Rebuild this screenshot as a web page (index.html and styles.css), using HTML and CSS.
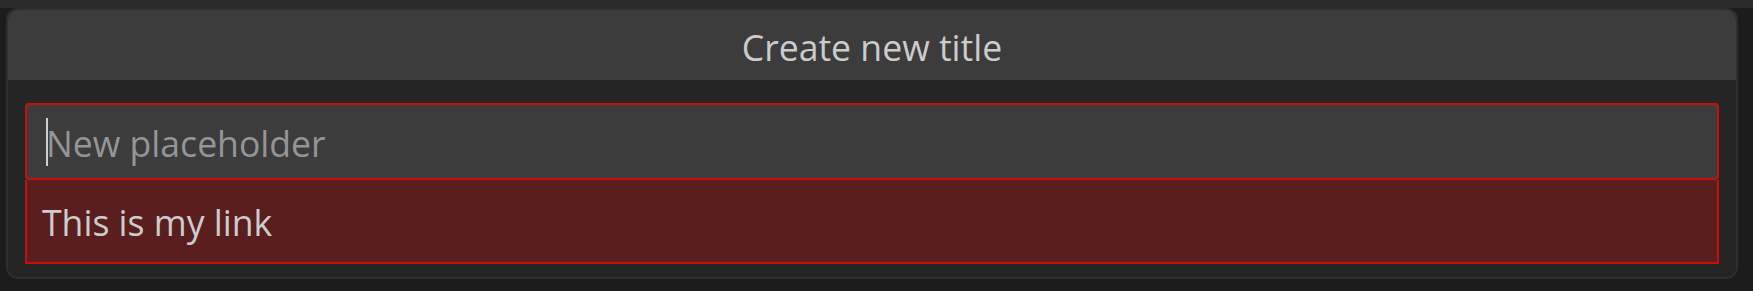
FILE: index.html
```html
<!DOCTYPE html>
<html lang="en">
<head>
<meta charset="utf-8">
<title>Create new title</title>
<link rel="stylesheet" href="styles.css">
</head>
<body>
<div class="topbar"></div>
<div class="dialog">
  <div class="header">Create new title</div>
  <div class="body">
    <div class="list">
      <div class="input"><span class="caret"></span><span class="placeholder">New placeholder</span></div>
      <div class="item">This is my link</div>
    </div>
  </div>
</div>
</body>
</html>
```
FILE: styles.css
```css
html, body {
  margin: 0;
  padding: 0;
}
body {
  background: #1c1c1c;
  width: 1753px;
  height: 291px;
  overflow: hidden;
  font-family: "Open Sans", "Noto Sans", sans-serif;
}
.topbar {
  height: 8px;
  background: #2b2b2b;
}
.dialog {
  margin: 0 15px 0 6px;
  border: 2px solid #2e2e2e;
  border-radius: 12px;
  background: #252525;
  overflow: hidden;
}
.header {
  height: 70px;
  background: #3c3c3c;
  color: #cccccc;
  font-size: 35.6px;
  display: flex;
  align-items: center;
  justify-content: center;
  padding-top: 3px;
  box-sizing: border-box;
}
.body {
  padding: 23px 17px 13px 17px;
}
.list {
  display: flex;
  flex-direction: column;
}
.input {
  height: 77px;
  box-sizing: border-box;
  border: 2px solid #c80f0c;
  border-radius: 4px;
  background: #3c3c3c;
  display: flex;
  align-items: center;
  padding-left: 19px;
  font-size: 35.6px;
  color: #959595;
}
.caret {
  width: 2px;
  height: 48px;
  background: #cfcfcf;
  flex: none;
}
.placeholder {
  margin-left: -2px;
  padding-top: 3px;
}
.item {
  height: 84px;
  box-sizing: border-box;
  border: 2px solid #c80f0c;
  border-top: none;
  background: #5a1e1f;
  color: #cccccc;
  font-size: 35.6px;
  display: flex;
  align-items: center;
  padding-left: 15px;
  padding-top: 2px;
}
```
